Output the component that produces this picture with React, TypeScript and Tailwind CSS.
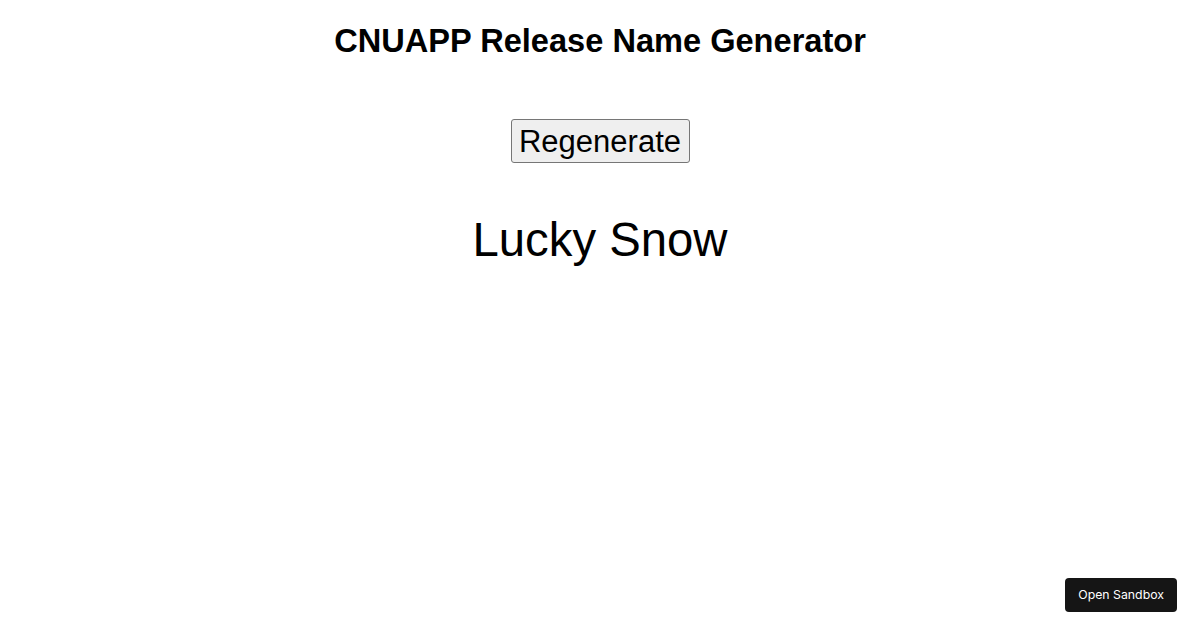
import { useState } from "react";

const names = ["Lucky Snow", "Brave Falcon", "Silent River", "Golden Maple"];

export default function App() {
  const [idx, setIdx] = useState(0);

  return (
    <div className="min-h-[630px] bg-white font-['Liberation_Sans',Arial,sans-serif] text-black">
      <div className="flex flex-col items-center pt-[22px] text-center">
        <h1 className="text-[32.6px] font-bold leading-[37px]">CNUAPP Release Name Generator</h1>
        <button
          onClick={() => setIdx((idx + 1) % names.length)}
          className="mt-[60px] h-[44px] w-[179px] rounded-[3px] border border-[#767676] bg-[#efefef] text-[31px] leading-[37px]"
        >
          Regenerate
        </button>
        <div className="mt-[49px] text-[47.3px] leading-[55px]">{names[idx]}</div>
      </div>

      <button className="fixed bottom-[18px] right-[23px] h-[34px] rounded-[4px] bg-[#151515] px-[13px] font-['Inter',sans-serif] text-[12.3px] text-white">
        Open Sandbox
      </button>
    </div>
  );
}
